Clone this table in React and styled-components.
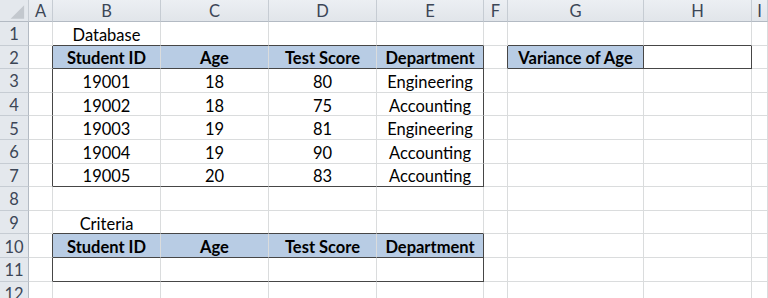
import React from "react";
import styled, { createGlobalStyle } from "styled-components";

const GlobalStyle = createGlobalStyle`
  html, body {
    margin: 0;
    padding: 0;
    background: #ffffff;
    overflow: hidden;
  }
`;

// column letters and widths (px), the last one fills what is left
const columns = [
  { key: "A", w: "24px" },
  { key: "B", w: "108px" },
  { key: "C", w: "108px" },
  { key: "D", w: "108px" },
  { key: "E", w: "107px" },
  { key: "F", w: "24px" },
  { key: "G", w: "136px" },
  { key: "H", w: "108px" },
  { key: "I", w: "1fr" },
];

const ROWS = 12;

const cells = {
  B1: { text: "Database" },
  B2: { text: "Student ID", bold: true, fill: true },
  C2: { text: "Age", bold: true, fill: true },
  D2: { text: "Test Score", bold: true, fill: true },
  E2: { text: "Department", bold: true, fill: true },
  G2: { text: "Variance of Age", bold: true, fill: true },
  B3: { text: "19001" }, C3: { text: "18" }, D3: { text: "80" }, E3: { text: "Engineering" },
  B4: { text: "19002" }, C4: { text: "18" }, D4: { text: "75" }, E4: { text: "Accounting" },
  B5: { text: "19003" }, C5: { text: "19" }, D5: { text: "81" }, E5: { text: "Engineering" },
  B6: { text: "19004" }, C6: { text: "19" }, D6: { text: "90" }, E6: { text: "Accounting" },
  B7: { text: "19005" }, C7: { text: "20" }, D7: { text: "83" }, E7: { text: "Accounting" },
  B9: { text: "Criteria" },
  B10: { text: "Student ID", bold: true, fill: true },
  C10: { text: "Age", bold: true, fill: true },
  D10: { text: "Test Score", bold: true, fill: true },
  E10: { text: "Department", bold: true, fill: true },
};

// boxed ranges: first/last column index, first/last row, line under the head row, inner vertical lines
const boxes = [
  { c0: 1, c1: 4, r0: 2, r1: 7, headLine: true, inner: false },
  { c0: 1, c1: 4, r0: 10, r1: 11, headLine: true, inner: false },
  { c0: 6, c1: 7, r0: 2, r1: 2, headLine: false, inner: true },
];

const darkRight = (c, r) =>
  boxes.some(
    (b) =>
      r >= b.r0 &&
      r <= b.r1 &&
      (c === b.c0 - 1 || c === b.c1 || (b.inner && c >= b.c0 && c < b.c1))
  );

const darkBottom = (c, r) =>
  boxes.some(
    (b) =>
      c >= b.c0 &&
      c <= b.c1 &&
      (r === b.r0 - 1 || r === b.r1 || (b.headLine && r === b.r0))
  );

export default function App() {
  const rows = Array.from({ length: ROWS }, (_, i) => i + 1);

  return (
    <>
      <GlobalStyle />
      <Sheet $cols={columns.map((c) => c.w).join(" ")}>
        <Corner>
          <svg width="29" height="22" viewBox="0 0 29 22">
            <polygon points="25,5 25,19 11,19" fill="#c3c8ce" />
          </svg>
        </Corner>
        {columns.map((col) => (
          <ColHead key={col.key}>{col.key}</ColHead>
        ))}
        {rows.map((r) => (
          <React.Fragment key={r}>
            <RowHead>{r}</RowHead>
            {columns.map((col, c) => {
              const cell = cells[col.key + r] || {};
              return (
                <Cell
                  key={col.key}
                  $fill={cell.fill}
                  $bold={cell.bold}
                  $right={darkRight(c, r)}
                  $bottom={darkBottom(c, r)}
                >
                  {cell.text}
                </Cell>
              );
            })}
          </React.Fragment>
        ))}
      </Sheet>
    </>
  );
}

const Sheet = styled.div`
  display: grid;
  grid-template-columns: 29px ${(p) => p.$cols};
  grid-template-rows: 22px repeat(${ROWS}, 23.6px);
  width: 768px;
  height: 298px;
  overflow: hidden;
  font-family: Lato, "Open Sans", sans-serif;
  font-size: 16.5px;
  color: #000;
`;

const Corner = styled.div`
  background: #e4e8ed;
  border-right: 1px solid #c6ccd3;
  border-bottom: 1px solid #b3bac3;
  display: flex;
`;

const ColHead = styled.div`
  background: linear-gradient(#eceff3, #e1e5ea);
  border-right: 1px solid #c6ccd3;
  border-bottom: 1px solid #b3bac3;
  color: #3c4656;
  display: flex;
  align-items: center;
  justify-content: center;
  overflow: hidden;
`;

const RowHead = styled.div`
  background: #e4e8ed;
  border-right: 1px solid #b3bac3;
  border-bottom: 1px solid #c6ccd3;
  color: #3c4656;
  display: flex;
  align-items: center;
  justify-content: center;
  padding-top: 2px;
`;

const Cell = styled.div`
  background: ${(p) => (p.$fill ? "#b8cce4" : "#ffffff")};
  border-right: 1px solid ${(p) => (p.$right ? "#464646" : "#dadcdd")};
  border-bottom: 1px solid ${(p) => (p.$bottom ? "#464646" : "#dadcdd")};
  font-weight: ${(p) => (p.$bold ? 700 : 400)};
  display: flex;
  align-items: center;
  justify-content: center;
  padding-top: 3px;
  white-space: nowrap;
  overflow: visible;
`;
